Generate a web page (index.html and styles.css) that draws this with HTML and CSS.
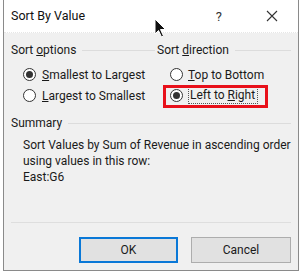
FILE: index.html
```html
<!DOCTYPE html>
<html>
<head>
<meta charset="utf-8">
<link rel="stylesheet" href="styles.css">
</head>
<body>
<div class="dialog">
  <div class="titlebar">
    <span class="title">Sort By Value</span>
    <span class="help">?</span>
    <svg class="close" width="12" height="12" viewBox="0 0 12 12"><path d="M1 1L11 11M11 1L1 11" stroke="#333" stroke-width="1.1" fill="none"/></svg>
  </div>
  <div class="content">
    <div class="groups">
      <div class="group">
        <div class="ghead"><span>Sort <u>o</u>ptions</span><i class="gline"></i></div>
        <div class="radios">
          <div class="radio"><svg width="13" height="13" viewBox="0 0 13 13"><circle cx="6.5" cy="6.5" r="6" fill="#fff" stroke="#333"/><circle cx="6.5" cy="6.5" r="3.5" fill="#333"/></svg><span><u>S</u>mallest to Largest</span></div>
          <div class="radio"><svg width="13" height="13" viewBox="0 0 13 13"><circle cx="6.5" cy="6.5" r="6" fill="#fff" stroke="#333"/></svg><span><u>L</u>argest to Smallest</span></div>
        </div>
      </div>
      <div class="group right">
        <div class="ghead"><span>Sort <u>d</u>irection</span><i class="gline"></i></div>
        <div class="radios">
          <div class="radio"><svg width="13" height="13" viewBox="0 0 13 13"><circle cx="6.5" cy="6.5" r="6" fill="#fff" stroke="#333"/></svg><span><u>T</u>op to Bottom</span></div>
          <div class="radio marked"><svg width="13" height="13" viewBox="0 0 13 13"><circle cx="6.5" cy="6.5" r="6" fill="#fff" stroke="#333"/><circle cx="6.5" cy="6.5" r="3.5" fill="#333"/></svg><span class="focus">Left to <u>R</u>ight</span></div>
        </div>
      </div>
    </div>
    <div class="ghead summary-head"><span>Summary</span><i class="gline"></i></div>
    <div class="summary">Sort Values by Sum of Revenue in ascending order<br>using values in this row:<br>East:G6</div>
    <div class="sep"></div>
    <div class="buttons">
      <button class="btn default">OK</button>
      <button class="btn">Cancel</button>
    </div>
  </div>
  <svg class="cursor" width="13" height="20" viewBox="0 0 13 20"><path d="M1 1L1 16L4.5 12.5L7.5 19L9.5 18L6.5 11.5L11.5 11.5Z" fill="#111" stroke="#fff" stroke-width="1"/></svg>
</div>
</body>
</html>
```
FILE: styles.css
```css
html, body { margin: 0; padding: 0; background: #fff; }
body {
  font-family: Roboto, "Segoe UI", sans-serif;
  font-size: 12px;
  color: #1a1a1a;
  width: 300px;
  height: 272px;
  overflow: hidden;
}
.dialog {
  position: relative;
  margin-left: 3px;
  width: 294px;
  height: 270px;
  border-left: 1px solid #8a8a8a;
  border-right: 1px solid #8a8a8a;
  border-bottom: 1px solid #8a8a8a;
  background: #f0f0f0;
  display: flex;
  flex-direction: column;
}
.titlebar {
  height: 33px;
  background: #fff;
  display: flex;
  align-items: center;
  padding-left: 7px;
  border-bottom: 1px dotted #e6e6e6;
  box-sizing: border-box;
}
.title { font-size: 12.5px; color: #111; flex: 1; padding-bottom: 1px; }
.help { font-size: 13px; color: #333; margin-right: 44px; }
.close { margin-right: 20px; }
.content { padding: 0 7px; display: flex; flex-direction: column; flex: 1; }
.groups { display: grid; grid-template-columns: 146px 1fr; }
.ghead { display: flex; align-items: center; height: 16px; margin-top: 9px; white-space: nowrap; }
.ghead .gline { flex: 1; height: 1px; background: #dcdcdc; margin-left: 6px; margin-top: 1px; }
.group:first-child .ghead .gline { margin-right: 2px; }
.radios { margin-top: 6px; padding-left: 12px; }
.right .radios { padding-left: 13px; }
.radio { display: flex; align-items: center; height: 21px; position: relative; white-space: nowrap; }
.radio svg { margin-right: 6px; flex: none; }
.right .radio svg { margin-right: 5px; }
.focus { border: 1px dotted #555; padding: 0 2px 0 1px; line-height: 15px; }
.marked::after {
  content: "";
  position: absolute;
  left: -7px;
  top: 0;
  width: 99px;
  height: 17px;
  border: 3px solid #e8101a;
}
.summary-head { margin-top: 9px; }
.summary { margin-top: 6px; padding-left: 12px; line-height: 16px; white-space: nowrap; }
.sep { height: 1px; background: #dedede; margin-top: 37px; }
.buttons { display: flex; justify-content: flex-end; gap: 13px; margin-top: 14px; }
.btn {
  font-family: Roboto, "Segoe UI", sans-serif;
  font-size: 12px;
  color: #1a1a1a;
  height: 26px;
  background: #e1e1e1;
  border: 1px solid #adadad;
  padding: 0;
}
.btn.default { width: 99px; border: 2px solid #0a78d7; }
.btn:last-child { width: 100px; }
.cursor { position: absolute; left: 150px; top: 18px; }
```
